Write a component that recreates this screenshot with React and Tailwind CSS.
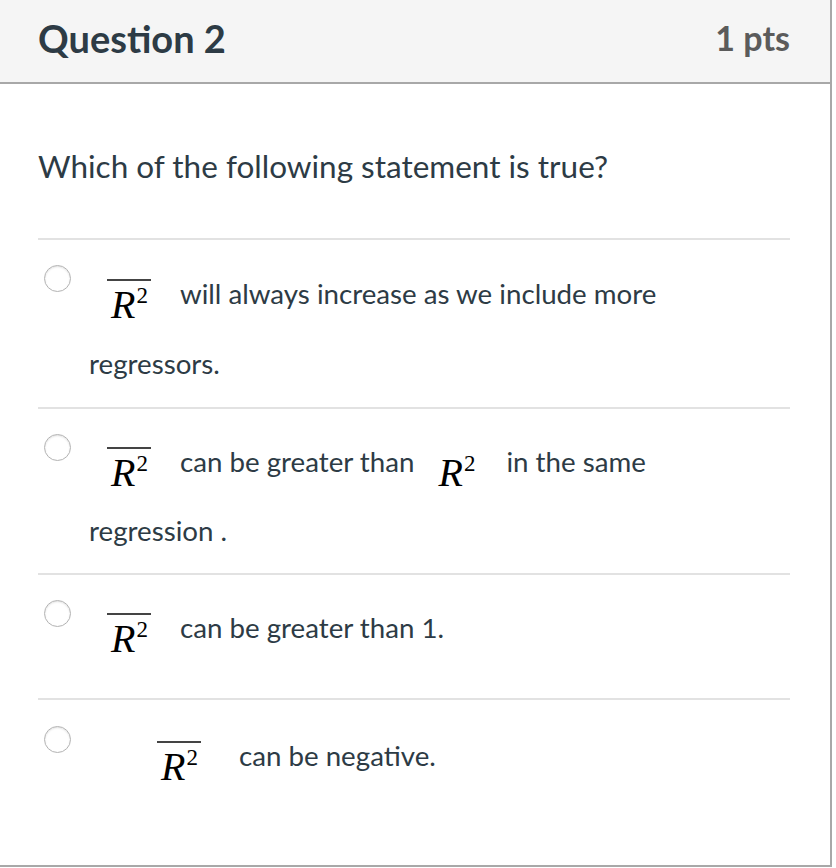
import React from "react";

function Rbar() {
  return (
    <span className="inline-block align-[-14px] border-t-[2px] border-[#444] pt-[3px] pl-[4px] pr-[3px] leading-none" style={{ fontFamily: '"Liberation Serif", "DejaVu Serif", serif' }}>
      <span className="italic text-[40px] leading-none text-black">R</span>
      <span className="text-[23px] leading-none text-black align-[15px] ml-[1px]">2</span>
    </span>
  );
}

function R2() {
  return (
    <span className="inline-block align-[-14px] pt-[5px] leading-none" style={{ fontFamily: '"Liberation Serif", "DejaVu Serif", serif' }}>
      <span className="italic text-[40px] leading-none text-black">R</span>
      <span className="text-[23px] leading-none text-black align-[15px] ml-[1px]">2</span>
    </span>
  );
}

function Radio() {
  return (
    <div className="w-[27px] h-[27px] rounded-full border border-[#b3b3b3] bg-white shadow-[inset_0_1px_2px_rgba(0,0,0,0.12)] shrink-0" />
  );
}

function Answer({ pt, pb, radioTop, lines, lineH }) {
  return (
    <div className="border-t-2 border-[#e2e2e2] flex">
      <div className={`ml-[6px] ${radioTop}`}>
        <Radio />
      </div>
      <div className={`ml-[18px] ${pt} ${pb} flex-1`}>
        {lines.map((l, i) => (
          <div key={i} className={`${lineH} whitespace-nowrap`}>
            {l}
          </div>
        ))}
      </div>
    </div>
  );
}

export default function App() {
  return (
    <div className="w-[836px] h-[868px] bg-white" style={{ fontFamily: 'Lato, "Liberation Sans", sans-serif' }}>
      <div className="w-[832px] h-[867px] border-r-2 border-b-2 border-[#a8a8a8] bg-white flex flex-col">
        <div className="h-[84px] bg-[#f5f5f5] border-b-2 border-[#a8a8a8] flex items-center justify-between pl-[38px] pr-[40px] pb-[6px]">
          <div className="text-[38px] font-bold text-[#2d3b45] leading-none">Question 2</div>
          <div className="text-[34px] font-bold text-[#5b5b5b] leading-none">1 pts</div>
        </div>
        <div className="pl-[38px] pr-[40px] flex-1 flex flex-col">
          <div className="h-[154px] pt-[62px] text-[31.5px] leading-[40px] text-[#2d3b45]">
            Which of the following statement is true?
          </div>
          <div className="text-[27.7px] text-[#2d3b45]">
            <Answer
              pt="pt-[19px]"
              pb="pb-[8px]"
              radioTop="mt-[25px]"
              lineH="h-[70px] leading-[70px]"
              lines={[
                <span className="pl-[18px]"><Rbar /><span className="ml-[29px]">will always increase as we include more</span></span>,
                <span>regressors.</span>,
              ]}
            />
            <Answer
              pt="pt-[18px]"
              pb="pb-[8px]"
              radioTop="mt-[25px]"
              lineH="h-[69px] leading-[70px]"
              lines={[
                <span className="pl-[18px]"><Rbar /><span className="ml-[29px]">can be greater than</span><span className="ml-[24px]"><R2 /></span><span className="ml-[31px]">in the same</span></span>,
                <span>regression .</span>,
              ]}
            />
            <Answer
              pt="pt-[18px]"
              pb="pb-[35px]"
              radioTop="mt-[25px]"
              lineH="h-[70px] leading-[70px]"
              lines={[
                <span className="pl-[18px]"><Rbar /><span className="ml-[29px]">can be greater than 1.</span></span>,
              ]}
            />
            <Answer
              pt="pt-[21px]"
              pb="pb-[74px]"
              radioTop="mt-[26px]"
              lineH="h-[70px] leading-[70px]"
              lines={[
                <span className="pl-[68px]"><Rbar /><span className="ml-[38px]">can be negative.</span></span>,
              ]}
            />
          </div>
        </div>
      </div>
    </div>
  );
}
